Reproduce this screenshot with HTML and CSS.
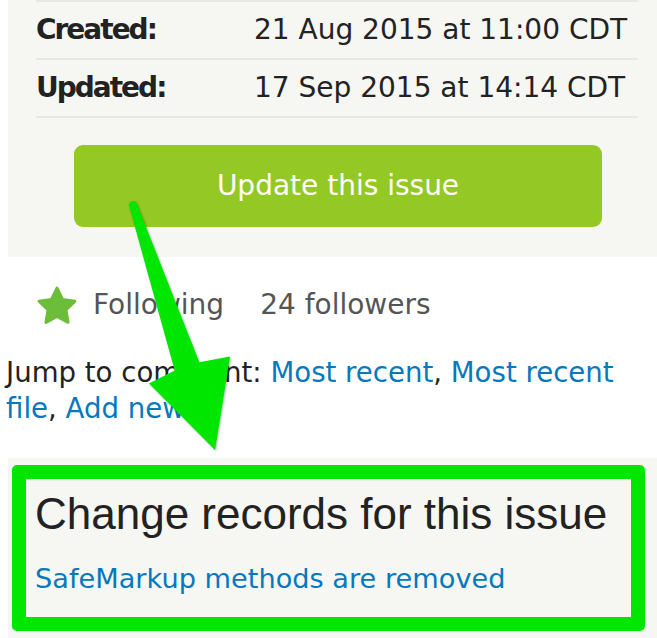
FILE: index.html
```html
<!DOCTYPE html>
<html lang="en">
<head>
  <meta charset="UTF-8" />
  <meta name="viewport" content="width=device-width, initial-scale=1.0" />
  <title>Issue sidebar</title>
  <link rel="stylesheet" href="styles.css">
</head>
<body>
  <div class="page">
    <!-- Issue metadata -->
    <section class="meta">
      <dl class="meta-rows">
        <div class="meta-row">
          <dt>Created:</dt>
          <dd>21 Aug 2015 at 11:00 CDT</dd>
        </div>
        <div class="meta-row">
          <dt>Updated:</dt>
          <dd>17 Sep 2015 at 14:14 CDT</dd>
        </div>
      </dl>
      <a class="update-button" href="#">Update this issue</a>
    </section>

    <!-- Follow -->
    <div class="follow">
      <svg class="star" width="42" height="40" viewBox="1 1 22 21" aria-hidden="true">
        <polygon points="12,2.6 14.9,8.6 21.4,9.5 16.7,14.1 17.8,20.6 12,17.5 6.2,20.6 7.3,14.1 2.6,9.5 9.1,8.6" />
      </svg>
      <span class="follow-label">Following</span>
      <span class="follow-count">24 followers</span>
    </div>

    <p class="jump">Jump to comment: <a href="#">Most recent</a>, <a href="#">Most recent file</a>, <a href="#">Add new</a></p>

    <!-- Change records -->
    <section class="changes">
      <div class="changes-box">
        <h2>Change records for this issue</h2>
        <a href="#">SafeMarkup methods are removed</a>
      </div>
    </section>

    <!-- Annotation arrow -->
    <svg class="arrow" width="657" height="638" viewBox="0 0 657 638" aria-hidden="true">
      <path d="M129.2 206.3 A4 4 0 0 1 136.8 203.7 L199.3 362.2 L230 356.5 L215 450 L149 383.5 L174.7 370.4 Z" />
    </svg>
  </div>
</body>
</html>
```

FILE: styles.css
```css
body {
  margin: 0;
  font-family: 'DejaVu Sans', sans-serif;
  font-size: 28px;
  color: #222;
  background: #fff;
}
a {
  color: #0678be;
  text-decoration: none;
}
.page {
  position: relative;
  width: 657px;
  height: 638px;
  overflow: hidden;
}

/* metadata panel */
.meta {
  margin-left: 8px;
  background: #f6f6f2;
  padding: 0 19px 30px 28px;
}
.meta-rows {
  margin: 0;
}
.meta-row {
  display: grid;
  grid-template-columns: 218px 1fr;
  height: 56px;
  line-height: 56px;
  border-top: 2px solid #e8e8e3;
  white-space: nowrap;
}
.meta-row:last-child {
  border-bottom: 2px solid #e8e8e3;
}
.meta-row dt {
  font-weight: bold;
  letter-spacing: -2px;
}
.meta-row dd {
  margin: 0;
}
.update-button {
  display: block;
  margin: 27px 36px 0 38px;
  height: 82px;
  line-height: 82px;
  border-radius: 9px;
  background: #94c825;
  color: #fff;
  text-align: center;
}

/* follow row */
.follow {
  display: flex;
  align-items: center;
  height: 40px;
  line-height: 40px;
  margin-top: 28px;
  padding-left: 36px;
  color: #555;
}
.star {
  fill: #6cbd3a;
  stroke: #6cbd3a;
  stroke-width: 1.6;
  stroke-linejoin: round;
  margin-right: 15px;
}
.follow-count {
  margin-left: 36px;
}

.jump {
  margin: 30px 0 0;
  padding-left: 6px;
  font-size: 27.6px;
  line-height: 36px;
}

/* change records */
.changes {
  margin: 31px 0 0 8px;
  padding: 7px 12px 8px 4px;
  background: #f6f6f2;
}
.changes-box {
  border: 14px solid #00e600;
  border-radius: 5px;
  padding: 10px 9px 20px;
}
.changes-box h2 {
  margin: 0 0 22px;
  font-family: 'Liberation Sans', Arial, sans-serif;
  font-size: 44px;
  font-weight: normal;
  line-height: 50px;
  color: #222;
}
.changes-box a {
  display: block;
  font-size: 27.2px;
  line-height: 36px;
}

.arrow {
  position: absolute;
  top: 0;
  left: 0;
  pointer-events: none;
  fill: #00e600;
  filter: drop-shadow(1px 1px 1px rgba(0, 0, 0, 0.3));
}
```
